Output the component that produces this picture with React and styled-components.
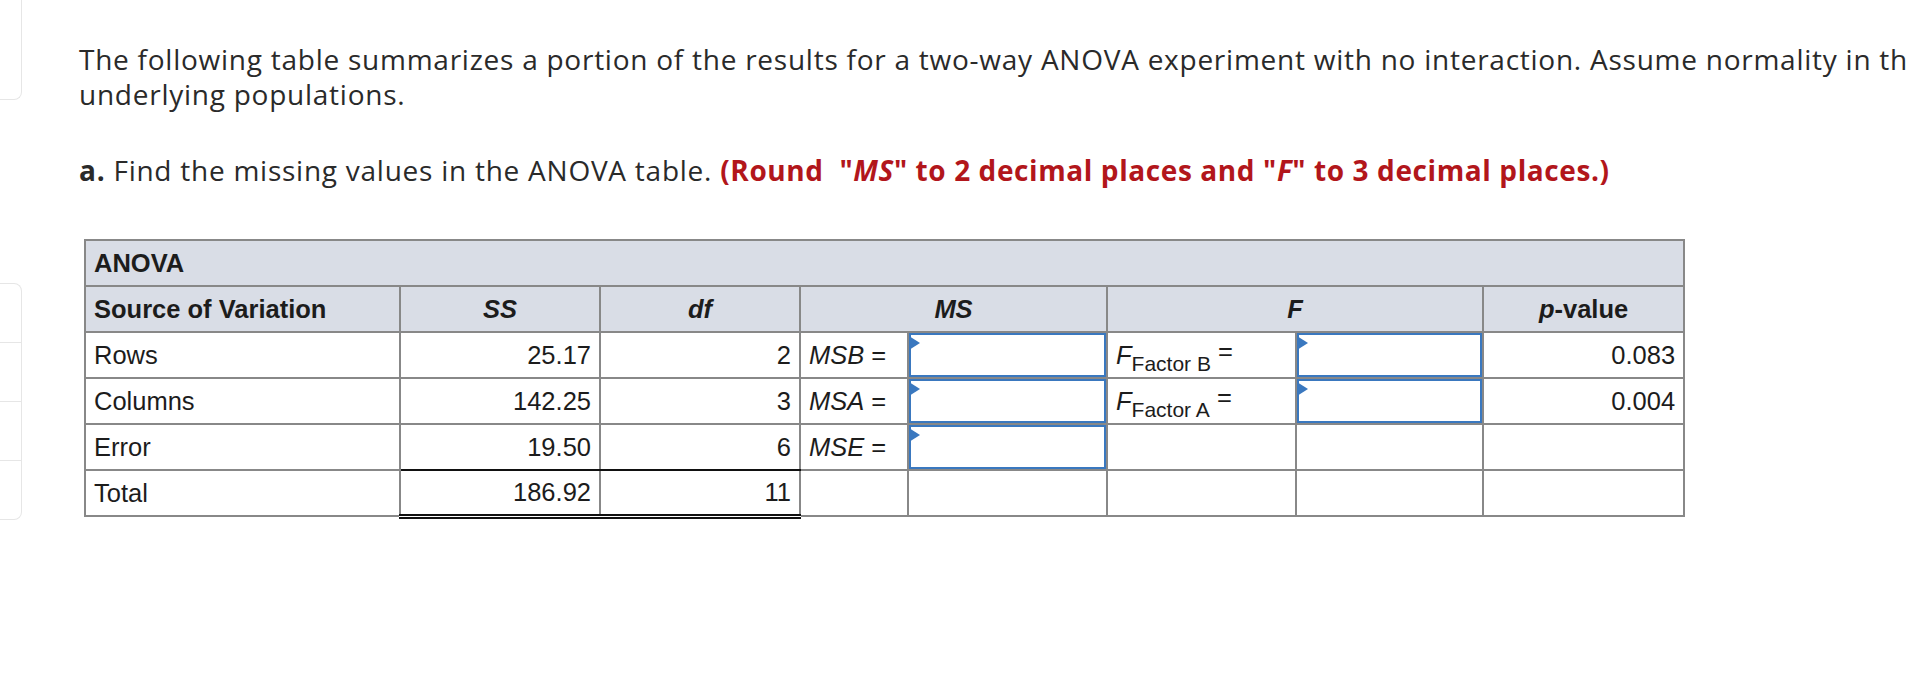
import React from 'react';
import styled, { createGlobalStyle } from 'styled-components';

const GlobalStyle = createGlobalStyle`
  html, body { margin: 0; padding: 0; background: #ffffff; }
  body { overflow: hidden; }
`;

const Page = styled.div`
  display: flex;
  align-items: flex-start;
  width: 1908px;
  height: 678px;
  overflow: hidden;
  background: #fff;
`;

const Sidebar = styled.aside`
  flex: 0 0 22px;
  display: flex;
  flex-direction: column;
`;

const TopCard = styled.div`
  box-sizing: border-box;
  height: 100px;
  border-right: 1px solid #e6e6e6;
  border-bottom: 1px solid #e6e6e6;
  border-bottom-right-radius: 8px;
`;

const NavGroup = styled.nav`
  margin-top: 183px;
  border: 1px solid #e6e6e6;
  border-left: none;
  border-radius: 0 8px 8px 0;
  display: flex;
  flex-direction: column;
`;

const NavItem = styled.div`
  height: 58px;
  & + & { border-top: 1px solid #e6e6e6; }
`;

const Main = styled.main`
  flex: 0 0 auto;
  width: 1880px;
  padding: 42px 0 0 57px;
  font-family: "Open Sans", Lato, sans-serif;
  color: #2a2a2a;
`;

const Prose = styled.p`
  margin: 0;
  font-size: 28px;
  line-height: 35px;
  letter-spacing: 0.75px;
  & + & { margin-top: 41px; }
`;

const Strong = styled.b`
  font-weight: 700;
`;

const Instruction = styled.span`
  color: #b2161b;
  font-weight: 700;
  letter-spacing: 0.6px;
`;

const Table = styled.table`
  margin: 51px 0 0 5px;
  border-collapse: collapse;
  table-layout: fixed;
  width: 1599px;
  font-family: "Liberation Sans", Arial, sans-serif;
  font-size: 25.5px;
  color: #1c1c1c;
`;

const Row = styled.tr`
  height: 46px;
`;

const HeadCell = styled.th`
  background: #d9dde6;
  border: 2px solid #888;
  padding: 0 8px;
  font-weight: 700;
  text-align: ${(p) => p.$align || 'center'};
  vertical-align: middle;
`;

const Cell = styled.td`
  border: 2px solid #888;
  padding: 0 ${(p) => (p.$flush ? '0' : '8px')};
  text-align: ${(p) => p.$align || 'left'};
  vertical-align: middle;
  white-space: nowrap;
  ${(p) => p.$ruleBelow && 'border-bottom: 2px solid #111;'}
  ${(p) => p.$doubleBelow && 'border-bottom: 5px double #111;'}
`;

const Answer = styled.div`
  position: relative;
  height: 44px;
  &::before {
    content: '';
    position: absolute;
    left: 0;
    top: 3px;
    border-left: 11px solid #3a78bf;
    border-top: 7px solid transparent;
    border-bottom: 7px solid transparent;
  }
`;

const AnswerInput = styled.input`
  display: block;
  box-sizing: border-box;
  width: 100%;
  height: 44px;
  margin: 0;
  padding: 0 8px;
  border: 2px solid #3a78bf;
  background: #fff;
  font: inherit;
  outline: none;
`;

const Sub = styled.sub`
  font-size: 21px;
  vertical-align: -7px;
  line-height: 0;
`;

const Equals = styled.span`
  position: relative;
  top: -4px;
`;

const blankInput = (label) => (
  <Cell $flush>
    <Answer>
      <AnswerInput aria-label={label} />
    </Answer>
  </Cell>
);

export default function App() {
  return (
    <>
      <GlobalStyle />
      <Page>
        <Sidebar>
          <TopCard />
          <NavGroup>
            <NavItem />
            <NavItem />
            <NavItem />
            <NavItem />
          </NavGroup>
        </Sidebar>
        <Main>
          <Prose>
            The following table summarizes a portion of the results for a two-way ANOVA experiment with no interaction. Assume normality in the underlying populations.
          </Prose>
          <Prose>
            <Strong>a.</Strong> Find the missing values in the ANOVA table.{' '}
            <Instruction>
              (Round&nbsp; "<i>MS</i>" to 2 decimal places and "<i>F</i>" to 3 decimal places.)
            </Instruction>
          </Prose>
          <Table>
            <colgroup>
              <col style={{ width: 315 }} />
              <col style={{ width: 200 }} />
              <col style={{ width: 200 }} />
              <col style={{ width: 108 }} />
              <col style={{ width: 199 }} />
              <col style={{ width: 189 }} />
              <col style={{ width: 187 }} />
              <col style={{ width: 201 }} />
            </colgroup>
            <thead>
              <Row>
                <HeadCell colSpan={8} $align="left">ANOVA</HeadCell>
              </Row>
              <Row>
                <HeadCell $align="left">Source of Variation</HeadCell>
                <HeadCell><i>SS</i></HeadCell>
                <HeadCell><i>df</i></HeadCell>
                <HeadCell colSpan={2}><i>MS</i></HeadCell>
                <HeadCell colSpan={2}><i>F</i></HeadCell>
                <HeadCell><i>p</i>-value</HeadCell>
              </Row>
            </thead>
            <tbody>
              <Row>
                <Cell>Rows</Cell>
                <Cell $align="right">25.17</Cell>
                <Cell $align="right">2</Cell>
                <Cell><i>MSB</i> =</Cell>
                {blankInput('MSB')}
                <Cell><i>F</i><Sub>Factor B</Sub> <Equals>=</Equals></Cell>
                {blankInput('F Factor B')}
                <Cell $align="right">0.083</Cell>
              </Row>
              <Row>
                <Cell>Columns</Cell>
                <Cell $align="right">142.25</Cell>
                <Cell $align="right">3</Cell>
                <Cell><i>MSA</i> =</Cell>
                {blankInput('MSA')}
                <Cell><i>F</i><Sub>Factor A</Sub> <Equals>=</Equals></Cell>
                {blankInput('F Factor A')}
                <Cell $align="right">0.004</Cell>
              </Row>
              <Row>
                <Cell>Error</Cell>
                <Cell $align="right" $ruleBelow>19.50</Cell>
                <Cell $align="right" $ruleBelow>6</Cell>
                <Cell><i>MSE</i> =</Cell>
                {blankInput('MSE')}
                <Cell />
                <Cell />
                <Cell />
              </Row>
              <Row>
                <Cell>Total</Cell>
                <Cell $align="right" $doubleBelow>186.92</Cell>
                <Cell $align="right" $doubleBelow>11</Cell>
                <Cell />
                <Cell />
                <Cell />
                <Cell />
                <Cell />
              </Row>
            </tbody>
          </Table>
        </Main>
      </Page>
    </>
  );
}
